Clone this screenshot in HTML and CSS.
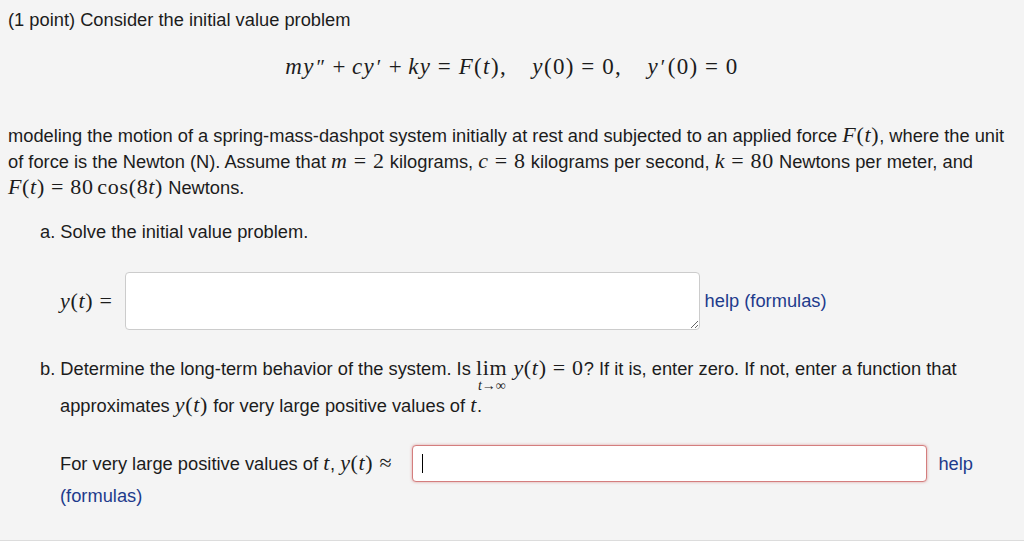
FILE: index.html
```html
<!DOCTYPE html>
<html>
<head>
<meta charset="utf-8">
<link rel="stylesheet" href="styles.css">
</head>
<body>
<div class="page">
  <p class="intro">(1 point) Consider the initial value problem</p>
  <div class="display"><span class="m"><i>m</i><i>y</i><span class="pr">″</span><span class="bin">+</span><i>c</i><i>y</i><span class="pr">′</span><span class="bin">+</span><i>k</i><i>y</i><span class="rel">=</span><i>F</i>(<i>t</i>),<span class="q"></span><i>y</i>(0)<span class="rel">=</span>0,<span class="q"></span><i>y</i><span class="pr">′</span>(0)<span class="rel">=</span>0</span></div>
  <p class="para">modeling the motion of a spring-mass-dashpot system initially at rest and subjected to an applied force <span class="m"><i>F</i>(<i>t</i>)</span>, where the unit<br>of force is the Newton (N). Assume that <span class="m"><i>m</i><span class="rel">=</span>2</span> kilograms, <span class="m"><i>c</i><span class="rel">=</span>8</span> kilograms per second, <span class="m"><i>k</i><span class="rel">=</span>80</span> Newtons per meter, and<br><span class="m"><i>F</i>(<i>t</i>)<span class="rel">=</span>80<span class="fn">cos</span>(8<i>t</i>)</span> Newtons.</p>
  <p class="part">a. Solve the initial value problem.</p>
  <div class="answer-row row-a">
    <span class="m lbl"><i>y</i>(<i>t</i>)<span class="rel">=</span></span>
    <textarea class="ta"></textarea>
    <a class="help">help (formulas)</a>
  </div>
  <div class="part-b">
    <div class="bline">b. Determine the long-term behavior of the system. Is <span class="m"><span class="lim">lim<span class="under"><i>t</i>→∞</span></span> <i>y</i>(<i>t</i>)<span class="rel">=</span>0</span>? If it is, enter zero. If not, enter a function that</div>
    <div class="bline indent">approximates <span class="m"><i>y</i>(<i>t</i>)</span> for very large positive values of <span class="m"><i>t</i></span>.</div>
  </div>
  <div class="answer-row row-b">
    <span class="lbl2">For very large positive values of <span class="m"><i>t</i></span>, <span class="m"><i>y</i>(<i>t</i>)<span class="rel">≈</span></span></span>
    <div class="inp"><span class="caret"></span></div>
    <a class="help">help</a>
  </div>
  <div class="formulas"><a class="help">(formulas)</a></div>
</div>
</body>
</html>
```
FILE: styles.css
```css
html, body {
  margin: 0;
  padding: 0;
  background: #ffffff;
}
.page {
  box-sizing: border-box;
  height: 541px;
  background: #f4f4f4;
  border-bottom: 1px solid #dcdcdc;
  padding: 10px 8px 0 8px;
  font-family: "Liberation Sans", Arial, sans-serif;
  font-size: 18.3px;
  color: #1c1c1c;
}
p { margin: 0; }
.intro {
  line-height: 20px;
}
.m {
  font-family: "Liberation Serif", "Times New Roman", serif;
  font-size: 22px;
  line-height: 1;
  white-space: nowrap;
  letter-spacing: 0.03em;
}
.m i { font-style: italic; }
.rel { margin: 0 0.28em; }
.bin { margin: 0 0.22em; }
.pr { font-size: 0.9em; margin-left: 0.08em; margin-right: 0.05em; }
.q { display: inline-block; width: 1.1em; }
.fn { margin-left: 0.17em; }
.display {
  margin-top: 25px;
  height: 24px;
  line-height: 24px;
  text-align: center;
}
.display .m { font-size: 23px; letter-spacing: 0.06em; }
.para {
  margin-top: 44px;
  line-height: 26px;
}
.part {
  margin-top: 21px;
  margin-left: 32px;
  line-height: 20px;
}
.answer-row {
  display: flex;
  align-items: center;
}
.row-a {
  margin-top: 30px;
  margin-left: 52px;
}
.lbl { margin-right: 6px; }
.ta {
  box-sizing: border-box;
  width: 575px;
  height: 58px;
  margin: 0;
  border: 1px solid #cccccc;
  border-radius: 4px;
  background: #fff;
  display: block;
}
.help {
  color: #1e3b8c;
  text-decoration: none;
}
.row-a .help { margin-left: 5px; }
.part-b {
  margin-top: 20px;
  margin-left: 32px;
}
.bline {
  line-height: 37px;
  height: 37px;
}
.bline.indent { margin-left: 20px; }
.lim {
  position: relative;
  display: inline-block;
  line-height: 20px;
}
.under {
  position: absolute;
  left: 2px;
  top: 21px;
  font-size: 14px;
  line-height: 14px;
  letter-spacing: 0;
  white-space: nowrap;
}
.row-b {
  margin-top: 21px;
  margin-left: 52px;
}
.lbl2 { margin-right: 14px; }
.inp {
  box-sizing: border-box;
  width: 515px;
  height: 37px;
  border: 1px solid #d47e7e;
  border-radius: 4px;
  background: #fff;
  box-shadow: 0 0 3px rgba(200, 90, 90, 0.55);
  display: flex;
  align-items: center;
  padding-left: 9px;
}
.caret {
  display: block;
  width: 1px;
  height: 19px;
  background: #000;
}
.row-b .help { margin-left: 11px; }
.formulas {
  margin-top: 4px;
  margin-left: 52px;
  line-height: 20px;
}
```
